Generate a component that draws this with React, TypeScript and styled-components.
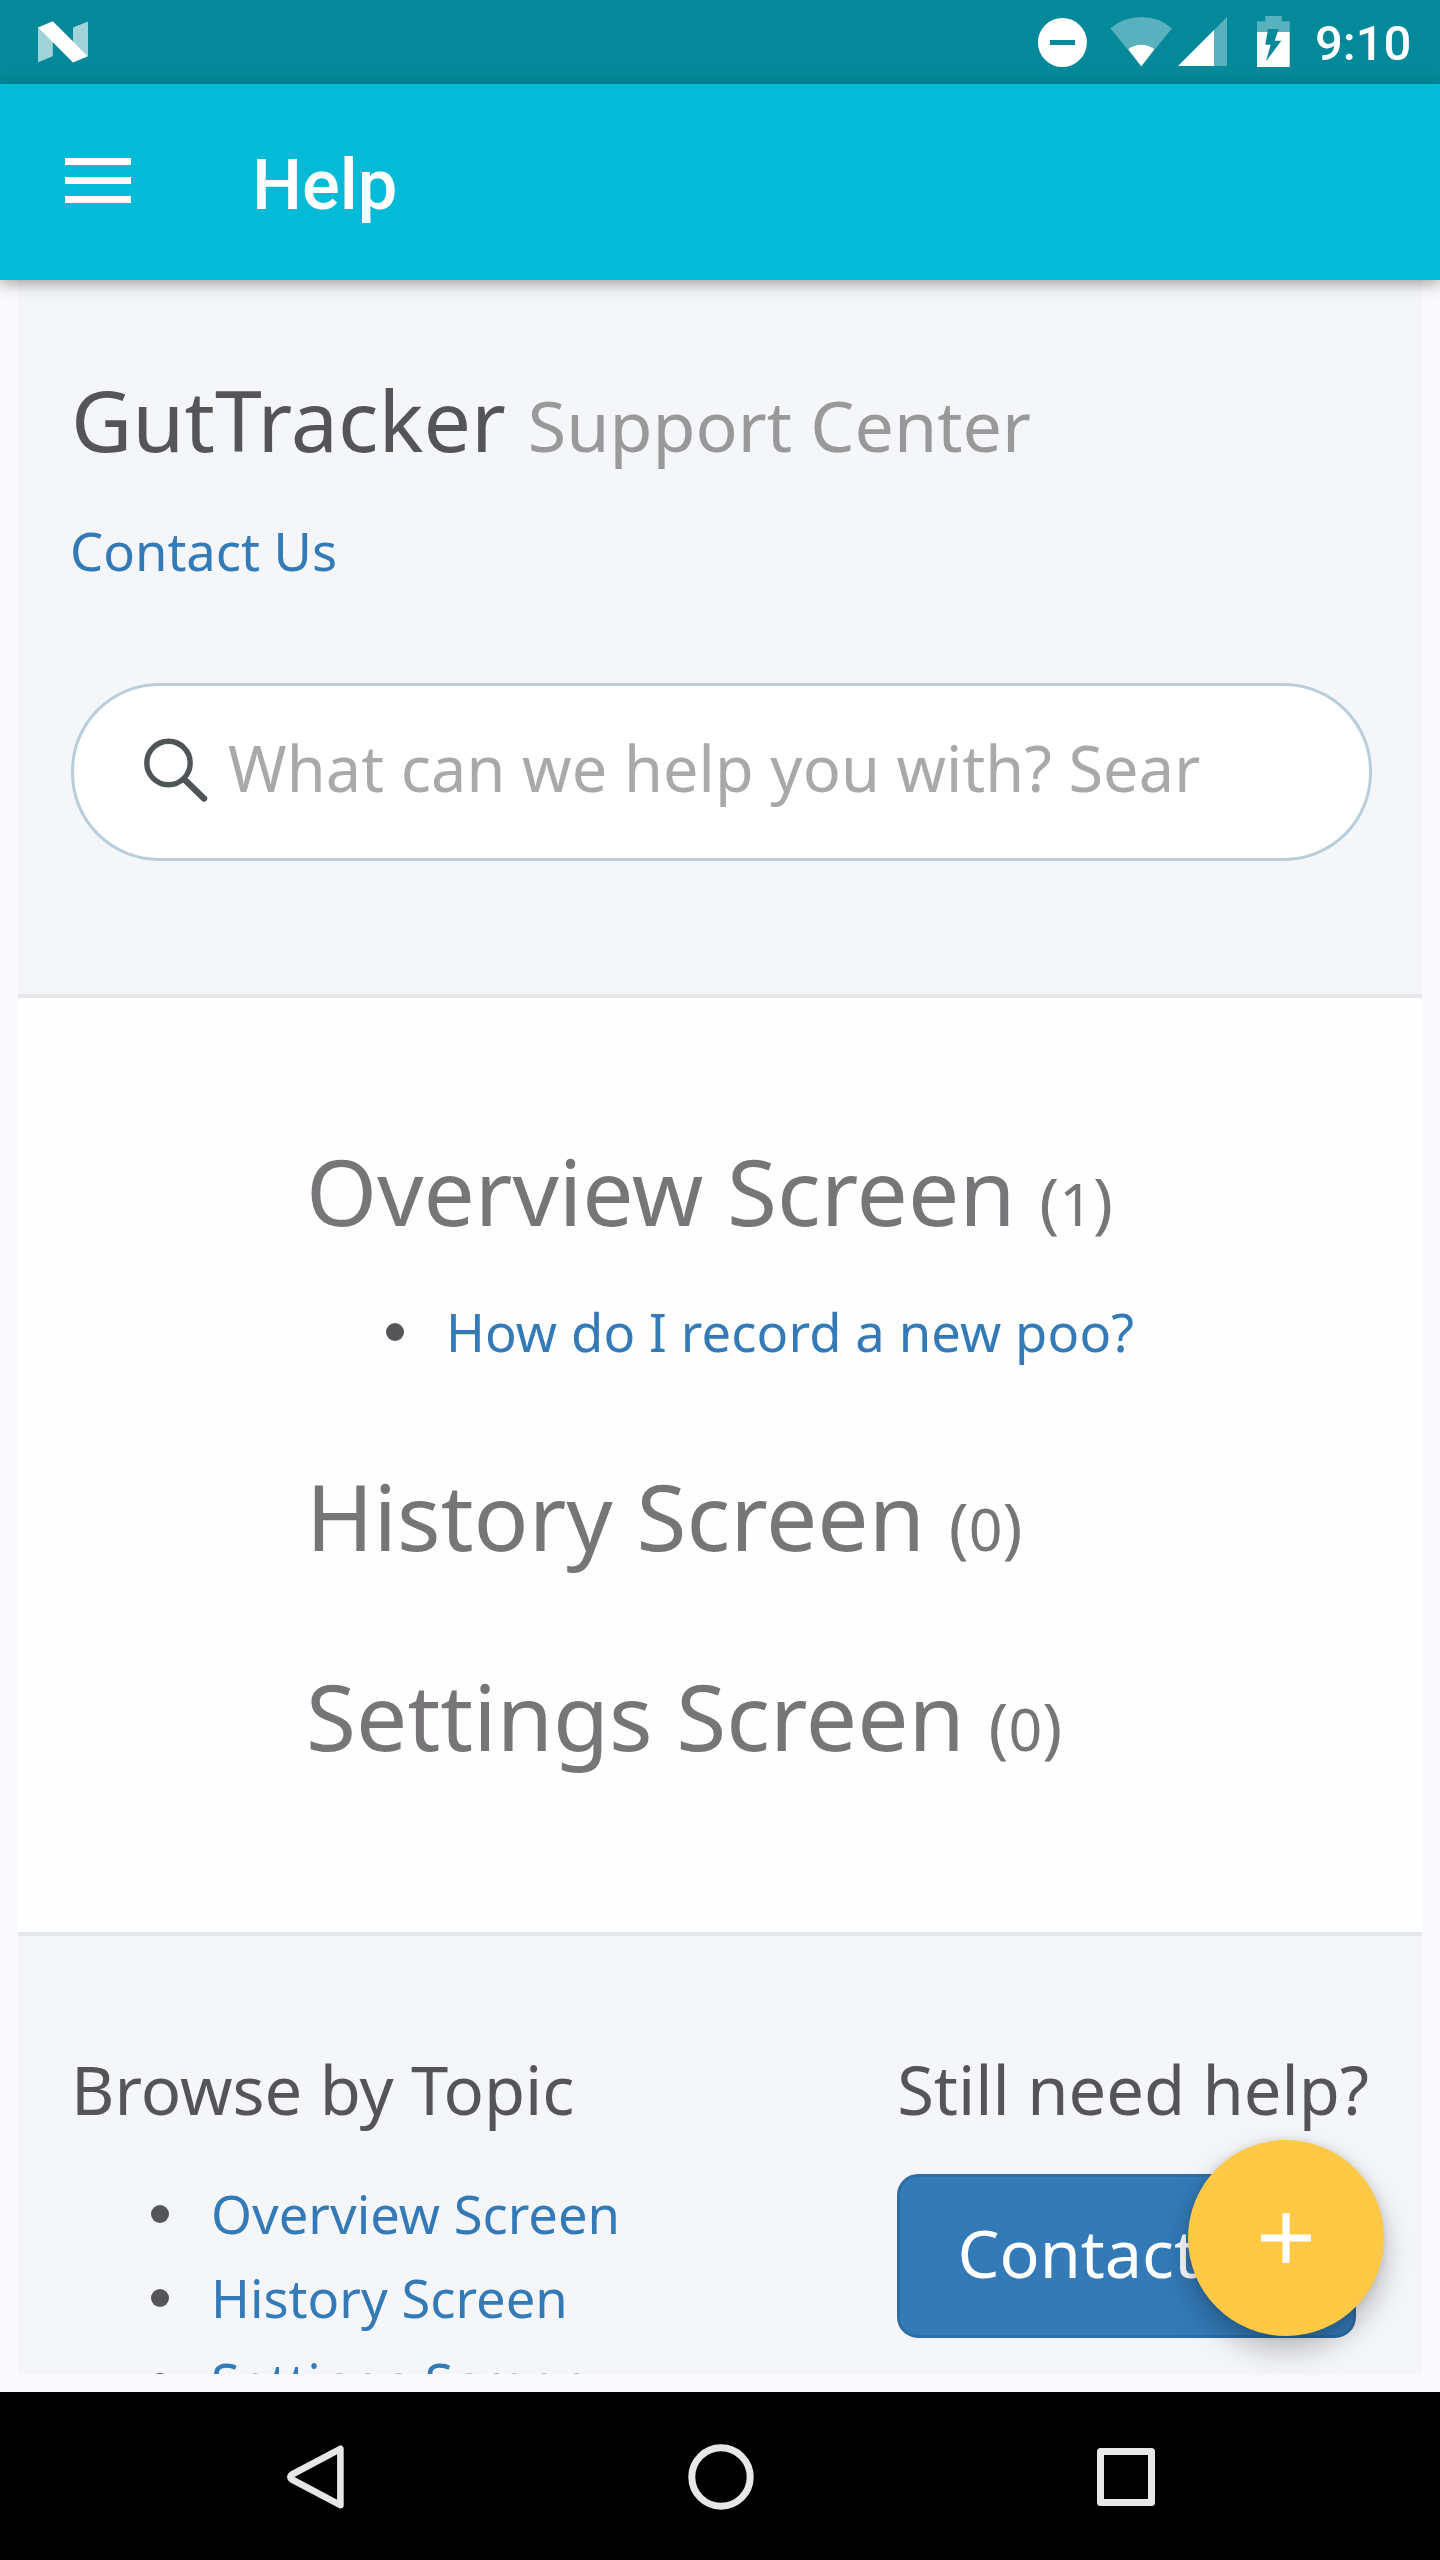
import React from "react";
import styled, { createGlobalStyle } from "styled-components";

const GlobalStyle = createGlobalStyle`
  *, *::before, *::after { box-sizing: border-box; }
  body { margin: 0; background: #faf9fc; }
  h1, h2, h3, ul { margin: 0; padding: 0; font-weight: 400; }
`;

const Screen = styled.div`
  position: relative;
  display: flex;
  flex-direction: column;
  width: 1440px;
  height: 2560px;
  overflow: hidden;
  background: #fafafc;
  font-family: "Noto Sans", "Open Sans", sans-serif;
  color: #555557;
`;

const StatusBar = styled.div`
  display: flex;
  justify-content: space-between;
  height: 84px;
  flex: none;
  padding: 0 28px 0 36px;
  background: #038999;
`;

const StatusGroup = styled.div`
  display: flex;
  align-items: flex-start;
`;

const Clock = styled.span`
  width: 97px;
  margin-left: 23px;
  font: 500 49px/84px Roboto, sans-serif;
  padding-top: 2px;
  color: #fff;
`;

const AppBar = styled.header`
  position: relative;
  z-index: 1;
  display: flex;
  flex: none;
  gap: 120px;
  height: 196px;
  padding-left: 65px;
  background: #04bad7;
  box-shadow: 0 4px 14px rgba(0, 0, 0, 0.34);
`;

const AppTitle = styled.h1`
  padding-top: 3px;
  font: 500 70.5px/196px Roboto, sans-serif;
  color: #fff;
`;

const WebView = styled.main`
  flex: none;
  height: 2094px;
  margin: 0 18px;
  overflow: hidden;
`;

const Hero = styled.section`
  height: 718px;
  padding: 94px 50px 0 53px;
  background: #f5f6f9;
  border-bottom: 4px solid #e8e8ec;
`;

const SiteTitle = styled.h1`
  font-size: 84.3px;
  line-height: 92px;
  white-space: nowrap;
`;

const Tagline = styled.small`
  font-size: 70px;
  line-height: 1;
  color: #999;
`;

const Link = styled.a<{ $tracking?: number }>`
  font-size: 52.5px;
  line-height: 84px;
  letter-spacing: ${(p) => p.$tracking ?? 0}px;
  color: #337ab7;
  text-decoration: none;
`;

const ContactRow = styled.div`
  display: flex;
  margin: 43px 0 0 -1px;
`;

const SearchBox = styled.label`
  display: flex;
  align-items: center;
  gap: 19px;
  height: 178px;
  margin-top: 90px;
  padding: 0 90px 0 67px;
  border: 3px solid #b9cddb;
  border-radius: 88px;
  background: #fff;
`;

const SearchInput = styled.input`
  flex: 1;
  min-width: 0;
  height: 100px;
  margin: 0 0 8px;
  padding: 0;
  border: 0;
  outline: 0;
  background: transparent;
  font: 400 63px/100px "Noto Sans", sans-serif;
  letter-spacing: 0.13px;
  &::placeholder {
    color: #aaa8ab;
    opacity: 1;
  }
`;

const Topics = styled.section`
  height: 934px;
  padding: 131px 0 0 288px;
  background: #fefefe;
`;

const Topic = styled.article`
  & + & {
    margin-top: 76px;
  }
`;

const TopicTitle = styled.h2`
  font-size: 91.1px;
  line-height: 124px;
  color: #777578;
  white-space: nowrap;
`;

const Count = styled.small`
  font-size: 66.5px;
  line-height: 1;
`;

const Digit = styled.span`
  font-size: 59px;
`;

const LinkList = styled.ul<{ $top: number; $bottom?: number }>`
  list-style: none;
  margin-top: ${(p) => p.$top}px;
  margin-bottom: ${(p) => p.$bottom ?? 0}px;
`;

const LinkItem = styled.li`
  display: flex;
  align-items: center;
  gap: 42px;
  height: 84px;
  padding-left: 80px;
  white-space: nowrap;
  &::before {
    content: "";
    width: 18px;
    height: 18px;
    border-radius: 50%;
    background: #555557;
  }
`;

const Footer = styled.footer`
  display: flex;
  justify-content: space-between;
  height: 600px;
  padding: 111px 53px 0 53px;
  border-top: 4px solid #e4e8ea;
  background: #f5f6f9;
`;

const FooterTitle = styled.h3`
  font-size: 66.9px;
  line-height: 84px;
  white-space: nowrap;
`;

const ContactButton = styled.button`
  display: block;
  width: 459px;
  height: 164px;
  margin: 43px 0 0;
  padding: 0 0 8px;
  border: 3px solid #2e6da4;
  border-radius: 21px;
  background: #337ab7;
  color: #fff;
  font: 400 66.5px/1.33 "Noto Sans", sans-serif;
`;

const Fab = styled.button`
  position: absolute;
  z-index: 2;
  left: 1188px;
  top: 2140px;
  display: grid;
  place-items: center;
  width: 196px;
  height: 196px;
  padding: 0;
  border: 0;
  border-radius: 50%;
  background: #ffc946;
  box-shadow: 0 14px 30px rgba(0, 0, 0, 0.26), 0 0 8px rgba(0, 0, 0, 0.1);
`;

const NavBar = styled.nav`
  display: flex;
  justify-content: space-between;
  align-items: center;
  height: 168px;
  flex: none;
  margin-top: 18px;
  padding: 1px 284px 0 285px;
  background: #000;
`;

const topics = [
  { name: "Overview Screen", count: 1, articles: ["How do I record a new poo?"] },
  { name: "History Screen", count: 0, articles: [] },
  { name: "Settings Screen", count: 0, articles: [] },
];

const NougatLogo = () => (
  <svg width="54" height="84" viewBox="36 0 54 84">
    <path d="M38 27.5V62.3L52.8 56.3V42ZM73 27.5L88 21.5V56.3L73 41.5Z" fill="#fff" fillOpacity=".63" />
    <path d="M52.8 21.3L38 27.4L73 62.4L88 56.3Z" fill="#fff" />
  </svg>
);

const SystemIcons = () => (
  <svg width="256" height="84" viewBox="1036 0 256 84">
    <circle cx="1062.4" cy="42.5" r="24.5" fill="#fff" />
    <path d="M1050 40h25v5h-25z" fill="#038999" />
    <path d="M1110.3 28.2Q1124 17 1141.3 17T1172 28.2L1141.3 66.2Z" fill="#fff" fillOpacity=".34" />
    <path d="M1128.3 49.3Q1134 44.8 1141.3 44.8T1154.3 49.3L1141.3 66.2Z" fill="#fff" />
    <path d="M1227 17V66H1214V30Z" fill="#fff" fillOpacity=".34" />
    <path d="M1214 30V66H1178Z" fill="#fff" />
    <path d="M1265.3 16h16.4v5.3h8V32h-32.7V21.3h8.3z" fill="#fff" fillOpacity=".34" />
    <path d="M1257 32h32.7v35H1257z" fill="#fff" />
    <path d="M1268 29h10.7l-4 11.7h6.6L1266 61.3l4.7-16.6h-5.4z" fill="#038999" />
  </svg>
);

const MenuIcon = () => (
  <svg width="67" height="196" viewBox="0 0 67 196">
    <path d="M0 74h66v7H0zM0 93h66v7H0zM0 112h66v7H0z" fill="#fff" />
  </svg>
);

const SearchIcon = () => (
  <svg width="68" height="68" viewBox="0 0 68 68" fill="none" stroke="#4f5556">
    <circle cx="27.5" cy="25" r="21.7" strokeWidth="5.4" />
    <path d="M43.5 41.5L63 60.5" strokeWidth="6.4" strokeLinecap="round" />
  </svg>
);

export default function App() {
  return (
    <Screen>
      <GlobalStyle />
      <StatusBar>
        <StatusGroup>
          <NougatLogo />
        </StatusGroup>
        <StatusGroup>
          <SystemIcons />
          <Clock>9:10</Clock>
        </StatusGroup>
      </StatusBar>
      <AppBar>
        <MenuIcon />
        <AppTitle>Help</AppTitle>
      </AppBar>
      <WebView>
        <Hero>
          <SiteTitle>
            GutTracker <Tagline>Support Center</Tagline>
          </SiteTitle>
          <ContactRow>
            <Link>Contact Us</Link>
          </ContactRow>
          <SearchBox>
            <SearchIcon />
            <SearchInput placeholder="What can we help you with? Sear" />
          </SearchBox>
        </Hero>
        <Topics>
          {topics.map((t) => (
            <Topic key={t.name}>
              <TopicTitle>
                {t.name}{" "}
                <Count>
                  (<Digit>{t.count}</Digit>)
                </Count>
              </TopicTitle>
              {t.articles.length > 0 && (
                <LinkList $top={37} $bottom={80}>
                  {t.articles.map((a) => (
                    <LinkItem key={a}>
                      <Link $tracking={0.12}>{a}</Link>
                    </LinkItem>
                  ))}
                </LinkList>
              )}
            </Topic>
          ))}
        </Topics>
        <Footer>
          <div>
            <FooterTitle>Browse by Topic</FooterTitle>
            <LinkList $top={41}>
              {topics.map((t) => (
                <LinkItem key={t.name}>
                  <Link>{t.name}</Link>
                </LinkItem>
              ))}
            </LinkList>
          </div>
          <div>
            <FooterTitle>Still need help?</FooterTitle>
            <ContactButton>Contact Us</ContactButton>
          </div>
        </Footer>
      </WebView>
      <Fab aria-label="Add">
        <svg width="50" height="50" viewBox="0 0 50 50">
          <path d="M21.5 0h7v21.5H50v7H28.5V50h-7V28.5H0v-7h21.5z" fill="#fff" />
        </svg>
      </Fab>
      <NavBar>
        <svg width="60" height="68" viewBox="0 0 60 68" fill="none" stroke="#e8e6e9" strokeWidth="6.6" strokeLinejoin="round">
          <path d="M55.4 5.8V62.2L7 36.5Q3.5 34 7 31.5Z" />
        </svg>
        <svg width="68" height="68" viewBox="0 0 68 68" fill="none" stroke="#e8e6e9" strokeWidth="7">
          <circle cx="34" cy="34" r="29.2" />
        </svg>
        <svg width="60" height="60" viewBox="0 0 60 60" fill="none" stroke="#e8e6e9" strokeWidth="7" strokeLinejoin="round">
          <rect x="4.5" y="4.5" width="51" height="51" />
        </svg>
      </NavBar>
    </Screen>
  );
}
